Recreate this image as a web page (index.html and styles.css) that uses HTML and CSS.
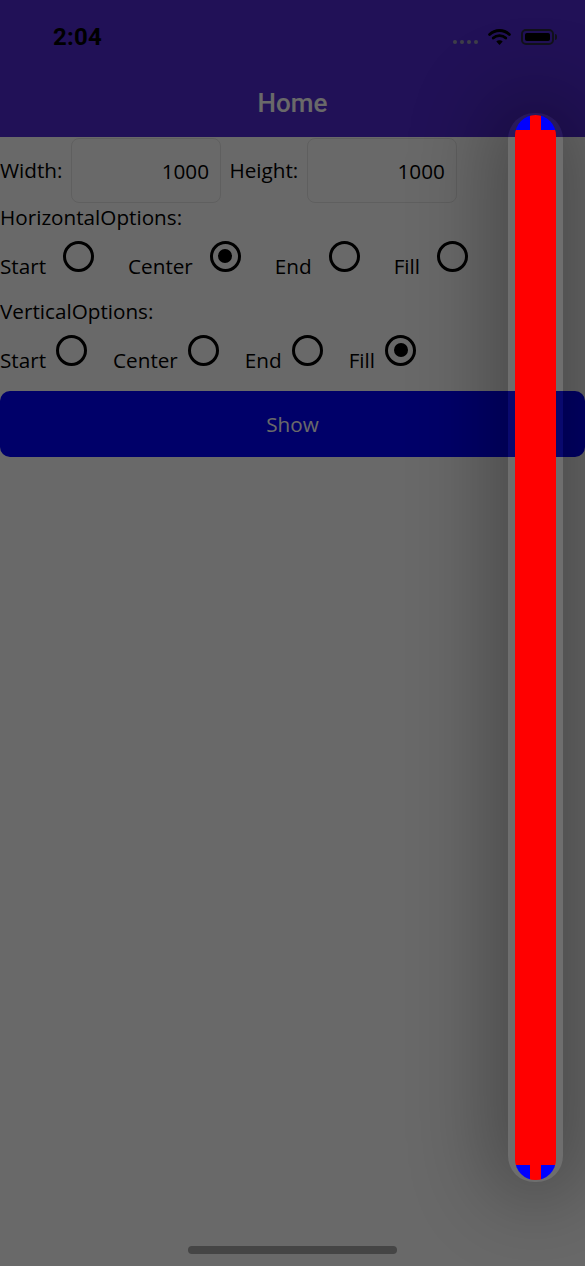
FILE: index.html
```html
<!DOCTYPE html>
<html lang="en">
<head>
<meta charset="utf-8">
<title>Home</title>
<link rel="stylesheet" href="styles.css">
</head>
<body>
<div class="screen">
  <header class="topbar">
    <div class="status">
      <span class="time">2:04</span>
      <div class="status-icons">
        <div class="signal"><i></i><i></i><i></i><i></i></div>
        <svg class="wifi" width="25" height="18" viewBox="0 0 25 18">
          <path d="M2.6 6.6 A14 14 0 0 1 22.4 6.6" fill="none" stroke="#000" stroke-width="2.8" stroke-linecap="round"/>
          <path d="M6.2 10.1 A9 9 0 0 1 18.8 10.1" fill="none" stroke="#000" stroke-width="2.8" stroke-linecap="round"/>
          <path d="M12.5 17 L9.3 13.6 A4.5 4.5 0 0 1 15.7 13.6 Z" fill="#000"/>
        </svg>
        <div class="battery"><div class="battery-fill"></div></div>
        <div class="battery-nub"></div>
      </div>
    </div>
    <div class="navbar"><span class="navtitle">Home</span></div>
  </header>

  <main class="content">
    <div class="size-row">
      <span class="lbl">Width:</span>
      <div class="entry">1000</div>
      <span class="lbl">Height:</span>
      <div class="entry">1000</div>
    </div>

    <div class="lbl block">HorizontalOptions:</div>
    <div class="radio-row h">
      <div class="radio-item"><span class="lbl rlbl">Start</span><span class="radio"></span></div>
      <div class="radio-item"><span class="lbl rlbl">Center</span><span class="radio checked"></span></div>
      <div class="radio-item"><span class="lbl rlbl">End</span><span class="radio"></span></div>
      <div class="radio-item"><span class="lbl rlbl">Fill</span><span class="radio"></span></div>
    </div>

    <div class="lbl block">VerticalOptions:</div>
    <div class="radio-row v">
      <div class="radio-item"><span class="lbl rlbl">Start</span><span class="radio"></span></div>
      <div class="radio-item"><span class="lbl rlbl">Center</span><span class="radio"></span></div>
      <div class="radio-item"><span class="lbl rlbl">End</span><span class="radio"></span></div>
      <div class="radio-item"><span class="lbl rlbl">Fill</span><span class="radio checked"></span></div>
    </div>

    <button class="show">Show</button>
  </main>

  <div class="dim"></div>
  <div class="popup"><div class="bar"></div></div>
  <div class="home-indicator"></div>
</div>
</body>
</html>
```

FILE: styles.css
```css
html, body {
  margin: 0;
  padding: 0;
}

body {
  background: #666;
}

.screen {
  position: relative;
  width: 585px;
  height: 1266px;
  overflow: hidden;
  background: #ffffff;
  font-family: "Open Sans", "Noto Sans", sans-serif;
  color: #000;
}

/* top bar */
.topbar {
  background: #512bd4;
  height: 137px;
  display: flex;
  flex-direction: column;
}

.status {
  height: 70px;
  display: flex;
  align-items: center;
  justify-content: space-between;
  padding: 0 28px 0 53px;
  box-sizing: border-box;
}

.time {
  font-family: Roboto, "Liberation Sans", sans-serif;
  font-weight: 700;
  font-size: 24px;
  letter-spacing: 0.2px;
  color: #000;
  margin-top: 4px;
}

.status-icons {
  display: flex;
  align-items: center;
  margin-top: 4px;
}

.signal {
  display: flex;
  gap: 3px;
  margin-right: 9px;
  margin-top: 9px;
}

.signal i {
  display: block;
  width: 4px;
  height: 4px;
  border-radius: 50%;
  background: #9a9ab0;
}

.wifi {
  display: block;
  margin-right: 9px;
}

.battery {
  width: 33px;
  height: 16px;
  border: 2px solid #2a2a40;
  border-radius: 5px;
  box-sizing: border-box;
  padding: 2px;
}

.battery-fill {
  width: 100%;
  height: 100%;
  background: #000;
  border-radius: 2px;
}

.battery-nub {
  width: 2px;
  height: 6px;
  background: #2a2a40;
  border-radius: 0 2px 2px 0;
  margin-left: 1px;
}

.navbar {
  height: 67px;
  display: flex;
  align-items: center;
  justify-content: center;
}

.navtitle {
  font-family: Roboto, "Liberation Sans", sans-serif;
  font-weight: 500;
  font-size: 26px;
  color: #ffffff;
  margin-top: -1px;
}

/* content */
.content {
  display: flex;
  flex-direction: column;
}

.lbl {
  font-size: 20.7px;
  line-height: 28.6px;
  color: #000;
  white-space: nowrap;
}

.size-row {
  display: flex;
  align-items: center;
  gap: 8.5px;
  height: 66px;
}

.entry {
  width: 150px;
  height: 65px;
  box-sizing: border-box;
  border: 1px solid #e6e6e6;
  border-radius: 8px;
  display: flex;
  align-items: center;
  justify-content: flex-end;
  padding-right: 11px;
  font-size: 20.7px;
  color: #000;
  padding-top: 1px;
}

.radio-row {
  display: flex;
  align-items: flex-start;
  padding: 9px 0 17px;
}

.radio-item {
  display: flex;
  align-items: flex-start;
}

.radio-row.h .radio-item {
  gap: 17px;
  margin-right: 34px;
}

.radio-row.v .radio-item {
  gap: 10px;
  margin-right: 26px;
}

.rlbl {
  margin-top: 11px;
}

.radio {
  width: 31px;
  height: 31px;
  box-sizing: border-box;
  border: 3px solid #000;
  border-radius: 50%;
  display: flex;
  align-items: center;
  justify-content: center;
}

.radio.checked::after {
  content: "";
  width: 14px;
  height: 14px;
  border-radius: 50%;
  background: #000;
}

.show {
  margin-top: 0;
  width: 585px;
  height: 66px;
  border: none;
  border-radius: 10px;
  background: #0000ff;
  color: #ffffff;
  font-family: "Open Sans", "Noto Sans", sans-serif;
  font-size: 20.7px;
  padding: 0;
}

/* modal overlay */
.dim {
  position: absolute;
  inset: 0;
  background: rgba(0, 0, 0, 0.59);
}

.popup {
  position: absolute;
  left: 508px;
  top: 113px;
  width: 55px;
  height: 1069px;
  box-sizing: border-box;
  padding: 2px 7px;
  border-radius: 26px;
  background: rgba(255, 255, 255, 0.035);
  box-shadow: 0 0 80px 20px rgba(0, 0, 0, 0.3);
}

.bar {
  height: 100%;
  border-radius: 20.5px;
  background:
    linear-gradient(#ff0000, #ff0000) center / 11px 100% no-repeat,
    linear-gradient(#ff0000, #ff0000) center / 100% calc(100% - 30px) no-repeat,
    #0000ff;
}

.home-indicator {
  position: absolute;
  left: 188px;
  top: 1246px;
  width: 209px;
  height: 8px;
  border-radius: 4px;
  background: #454545;
}
```
